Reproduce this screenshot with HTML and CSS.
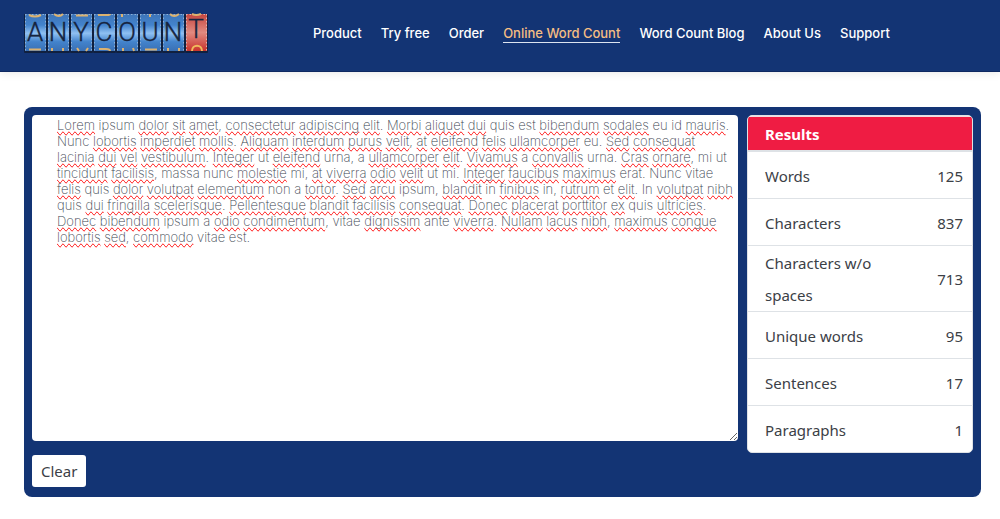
FILE: index.html
```html
<!DOCTYPE html>
<html lang="en">
<head>
<meta charset="utf-8">
<meta name="viewport" content="width=device-width, initial-scale=1">
<title>Online Word Count - AnyCount</title>
<link rel="stylesheet" href="styles.css">
</head>
<body>
<header class="site-header">
  <a class="logo" href="#" aria-label="AnyCount">
    <svg width="184" height="40" viewBox="0 0 184 40">
      <defs>
        <linearGradient id="blue" x1="0" y1="0" x2="0" y2="1">
          <stop offset="0" stop-color="#3d74b8"/>
          <stop offset=".3" stop-color="#4383cc"/>
          <stop offset=".52" stop-color="#8fc0f2"/>
          <stop offset=".75" stop-color="#4383cc"/>
          <stop offset="1" stop-color="#3a70b4"/>
        </linearGradient>
        <linearGradient id="red" x1="0" y1="0" x2="0" y2="1">
          <stop offset="0" stop-color="#c4453f"/>
          <stop offset=".5" stop-color="#e08a80"/>
          <stop offset="1" stop-color="#c9332c"/>
        </linearGradient>
        <g id="tile">
          <rect width="23" height="39" y="1" rx="1" fill="#10203f"/>
          <rect x="1" y="1" width="21" height="37" fill="url(#blue)"/>
          <path d="M1.500 1v37M21.500 1v37M1 1.500h21" stroke="#8fb0d6" stroke-dasharray="1.500 2" fill="none"/>
        </g>
      </defs>
      <use href="#tile"/><use href="#tile" x="23"/><use href="#tile" x="46"/><use href="#tile" x="69"/>
      <use href="#tile" x="92"/><use href="#tile" x="115"/><use href="#tile" x="138"/>
      <rect x="161" y="1" width="23" height="39" rx="1" fill="#10203f"/>
      <rect x="162" y="1" width="21" height="37" fill="url(#red)"/>
      <path d="M162.500 1v37M182.500 1v37M162 1.500h21" stroke="#e0b0b0" stroke-dasharray="1.500 2" fill="none"/>
      <g fill="none" stroke="#dcb270" stroke-width="2">
        <path d="M5 2q6 3 12 0M30 1q5 4 9 0M52 2.500h12M74 2h9q3 0 3-1M98 1v3M126 1v3M146 1q4 4 9 0M168 1q4 2 9 0"/>
        <path d="M5 36.500h12M28 35v3M39 35v3M53 35l2 3M64 35l-2 3M75 36h7q4 0 4 2M99 35v3M109 35l1 3M121 36.500h12M144 35v3M155 35v3"/>
        <path d="M168 38c0-7 10-7 10 0" stroke="#f0bb5c"/>
      </g>
      <g class="logo-letters">
        <text x="11" y="28">A</text><text x="34" y="28">N</text><text x="57" y="28">Y</text><text x="80" y="28">C</text>
        <text x="103" y="28">O</text><text x="126" y="28">U</text><text x="149" y="28">N</text><text x="172" y="25">T</text>
      </g>
    </svg>
  </a>
  <nav class="main-nav" aria-label="Main">
    <a href="#">Product</a>
    <a href="#">Try free</a>
    <a href="#">Order</a>
    <a class="current" href="#" aria-current="page">Online Word Count</a>
    <a href="#">Word Count Blog</a>
    <a href="#">About Us</a>
    <a href="#">Support</a>
  </nav>
</header>
<main class="counter">
  <div class="input-column">
    <div class="editor">
      <div class="spelling" aria-hidden="true"></div>
      <textarea class="source" aria-label="Text to count" spellcheck="false" wrap="off">Lorem ipsum dolor sit amet, consectetur adipiscing elit. Morbi aliquet dui quis est bibendum sodales eu id mauris.
Nunc lobortis imperdiet mollis. Aliquam interdum purus velit, at eleifend felis ullamcorper eu. Sed consequat
lacinia dui vel vestibulum. Integer ut eleifend urna, a ullamcorper elit. Vivamus a convallis urna. Cras ornare, mi ut
tincidunt facilisis, massa nunc molestie mi, at viverra odio velit ut mi. Integer faucibus maximus erat. Nunc vitae
felis quis dolor volutpat elementum non a tortor. Sed arcu ipsum, blandit in finibus in, rutrum et elit. In volutpat nibh
quis dui fringilla scelerisque. Pellentesque blandit facilisis consequat. Donec placerat porttitor ex quis ultricies.
Donec bibendum ipsum a odio condimentum, vitae dignissim ante viverra. Nullam lacus nibh, maximus congue
lobortis sed, commodo vitae est.</textarea>
    </div>
    <button class="clear" type="button">Clear</button>
  </div>
  <div class="results">
    <table>
      <colgroup><col><col class="count-col"></colgroup>
      <thead><tr><th colspan="2" scope="col">Results</th></tr></thead>
      <tbody>
        <tr><th scope="row">Words</th><td>125</td></tr>
        <tr><th scope="row">Characters</th><td>837</td></tr>
        <tr><th scope="row">Characters w/o spaces</th><td>713</td></tr>
        <tr><th scope="row">Unique words</th><td>95</td></tr>
        <tr><th scope="row">Sentences</th><td>17</td></tr>
        <tr><th scope="row">Paragraphs</th><td>1</td></tr>
      </tbody>
    </table>
  </div>
</main>
<script src="spelling.js"></script>
</body>
</html>
```
FILE: styles.css
```css
* { box-sizing: border-box; }

body {
  margin: 0;
  background: #fff;
  color: #3b4046;
  font: 15px/32px "Noto Sans", "Open Sans", sans-serif;
}

.site-header {
  display: flex;
  align-items: center;
  gap: 105px;
  padding: 13px 24px 18px;
  background: #133474;
  border-bottom: 1px solid #0d2760;
  box-shadow: 0 1px 9px rgba(0, 0, 0, .1);
}

.logo { display: flex; }

.logo-letters {
  fill: #16243f;
  stroke: #16243f;
  stroke-width: .4;
  font: 300 26px Roboto, sans-serif;
  text-anchor: middle;
}

.main-nav {
  display: flex;
  gap: 19px;
  padding-top: 1px;
  font: 500 13px/18px Inter, sans-serif;
}

.main-nav a {
  color: #fff;
  text-decoration: none;
  white-space: nowrap;
  border-bottom: 1px solid transparent;
}

.main-nav .current {
  color: #f6be83;
  border-bottom-color: #dde4f0;
}

.counter {
  display: grid;
  grid-template-columns: 1fr 226px;
  align-items: start;
  column-gap: 9px;
  margin: 35px 19px 22px 24px;
  padding: 8px 8px 10px;
  background: #133474;
  border-radius: 8px;
}

.input-column {
  display: flex;
  flex-direction: column;
  align-items: flex-start;
  gap: 14px;
}

.editor {
  position: relative;
  width: 100%;
  background: #fff;
  border-radius: 4px;
  overflow: hidden;
}

.source,
.spelling {
  padding: 2px 0 2px 25px;
  font: 200 13px/16px Inter, sans-serif;
  white-space: pre;
}

.source {
  position: relative;
  display: block;
  width: 100%;
  height: 326px;
  margin: 0;
  border: 0;
  outline: 0;
  background: transparent;
  color: #3d4652;
  overflow: hidden;
  resize: vertical;
}

.spelling {
  position: absolute;
  inset: 0;
  color: transparent;
}

.misspelled { text-decoration: spelling-error; }

.results {
  background: #fff;
  border: 1px solid #dee2e6;
  border-radius: 5px;
  overflow: hidden;
}

.results table {
  width: 100%;
  table-layout: fixed;
  border-collapse: separate;
  border-spacing: 0;
}

.count-col { width: 72px; }

.results th,
.results td {
  height: 47px;
  padding: 1px 9px 0 17px;
  border-bottom: 1px solid #dee2e6;
  text-align: left;
  font-weight: 400;
}

.results td { text-align: right; }

.results tbody tr:last-child > * {
  height: 46px;
  border-bottom: 0;
}

.results thead th {
  height: 36px;
  padding-top: 0;
  background: #ef1c43 padding-box;
  border-top: 1px solid #f3dce2;
  border-bottom: 2px solid #dee2e6;
  color: #fff;
  font-weight: 700;
}

.clear {
  padding: 0 9px;
  background: #fff;
  border: 0;
  border-radius: 3px;
  color: inherit;
  font: inherit;
}
```
FILE: spelling.js
```js
// Underlines the words that the dictionary does not know, on a layer behind the text box.
const known = new Set(['ipsum', 'nunc', 'ut', 'urna', 'a', 'massa', 'mi', 'quis', 'non', 'in', 'et', 'id', 'est', 'eu', 'vitae', 'erat', 'ante']);
const source = document.querySelector('.source');
const layer = document.querySelector('.spelling');

function check() {
  layer.replaceChildren(...source.value.split(/([A-Za-z]+)/).map(part => {
    if (!/^[A-Za-z]+$/.test(part) || known.has(part.toLowerCase())) return part;
    const word = document.createElement('span');
    word.className = 'misspelled';
    word.textContent = part;
    return word;
  }));
}

source.addEventListener('input', check);
document.querySelector('.clear').addEventListener('click', () => {
  source.value = '';
  check();
});
check();
```
